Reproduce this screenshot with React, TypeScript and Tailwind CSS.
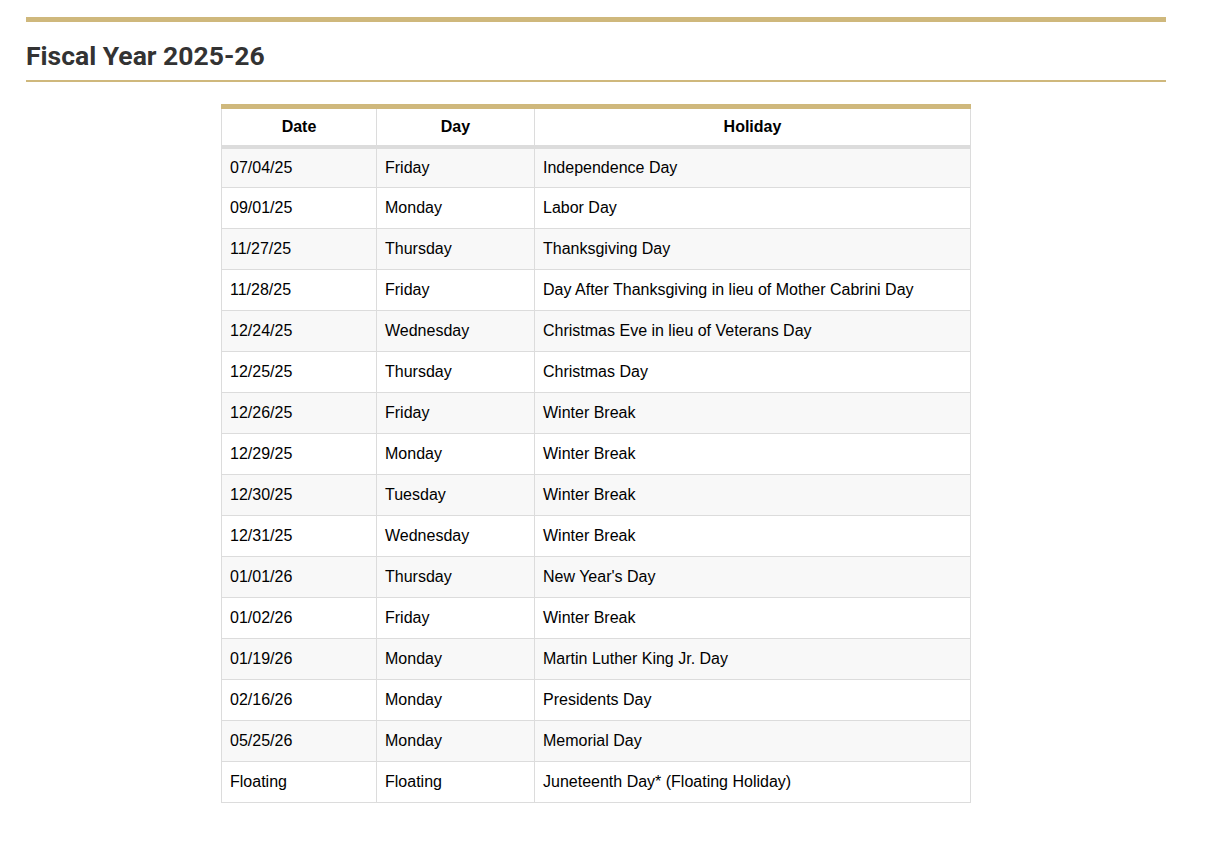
const rows = [
  ["07/04/25","Friday","Independence Day"],
  ["09/01/25","Monday","Labor Day"],
  ["11/27/25","Thursday","Thanksgiving Day"],
  ["11/28/25","Friday","Day After Thanksgiving in lieu of Mother Cabrini Day"],
  ["12/24/25","Wednesday","Christmas Eve in lieu of Veterans Day"],
  ["12/25/25","Thursday","Christmas Day"],
  ["12/26/25","Friday","Winter Break"],
  ["12/29/25","Monday","Winter Break"],
  ["12/30/25","Tuesday","Winter Break"],
  ["12/31/25","Wednesday","Winter Break"],
  ["01/01/26","Thursday","New Year's Day"],
  ["01/02/26","Friday","Winter Break"],
  ["01/19/26","Monday","Martin Luther King Jr. Day"],
  ["02/16/26","Monday","Presidents Day"],
  ["05/25/26","Monday","Memorial Day"],
  ["Floating","Floating","Juneteenth Day* (Floating Holiday)"],
];

export default function App() {
  return (
    <div className="bg-white min-h-[841px] pt-[17px] px-[26px] w-[1192px]" style={{ fontFamily: '"Liberation Sans", Arial, sans-serif' }}>
      <div className="h-[5px] bg-[#cfb87c]" />
      <h2 className="text-[26.5px] font-bold text-[#333] leading-[30px] pt-[19px] pb-[9px] border-b-2 border-[#cfb87c]" style={{ fontFamily: 'Roboto, sans-serif' }}>Fiscal Year 2025-26</h2>
      <div className="flex justify-center pt-[22px]">
        <table className="w-[750px] border-collapse border-t-[5px] border-[#cfb87c] text-[16px] text-black">
          <thead>
            <tr className="h-[40px] border-b-4 border-b-[#dcdcdc]">
              <th className="w-[155px] border border-[#dcdcdc] border-t-0 font-bold">Date</th>
              <th className="w-[158px] border border-[#dcdcdc] border-t-0 font-bold">Day</th>
              <th className="border border-[#dcdcdc] border-t-0 font-bold">Holiday</th>
            </tr>
          </thead>
          <tbody>
            {rows.map((r, i) => (
              <tr key={i} className={`h-[41px] ${i % 2 === 0 ? "bg-[#f8f8f8]" : "bg-white"}`}>
                {r.map((c, j) => (
                  <td key={j} className="border border-[#dcdcdc] px-[8px]">{c}</td>
                ))}
              </tr>
            ))}
          </tbody>
        </table>
      </div>
    </div>
  );
}
